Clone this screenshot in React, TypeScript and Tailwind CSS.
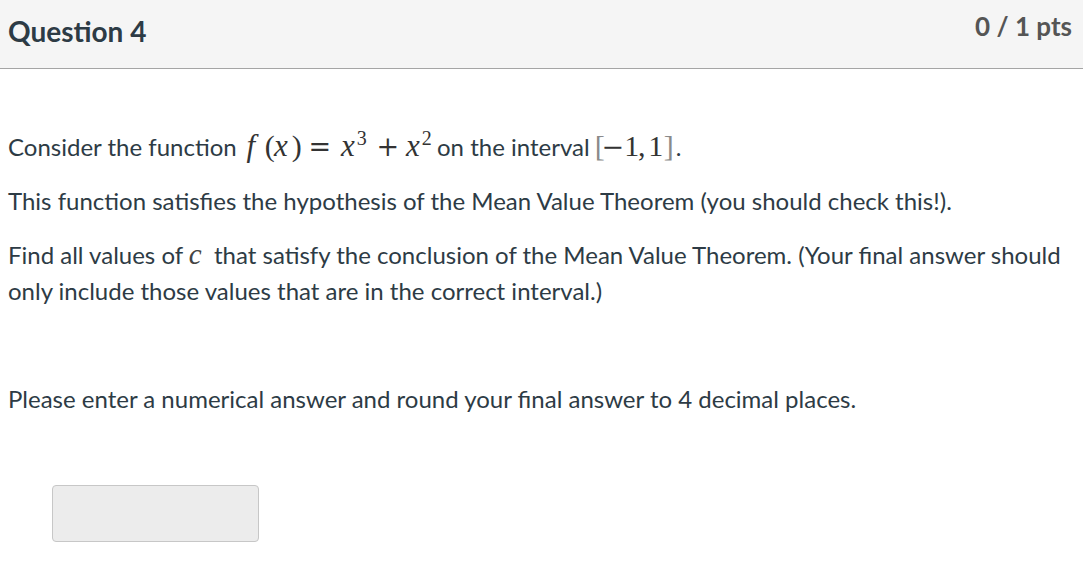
import React from "react";

const G = "inline-flex w-0 justify-center leading-none";
const L = "font-['Liberation_Serif',serif] italic text-[31px]";
const O = "font-['DejaVu_Serif',serif] text-[27px]";
const N = "font-['Liberation_Serif',serif] text-[30px]";
const S = "font-['Liberation_Serif',serif] text-[20px] relative -top-[11px]";

function Glyph({ ml, cls, children }: { ml: string; cls: string; children: React.ReactNode }) {
  return <span className={`${G} ${ml} ${cls}`}>{children}</span>;
}

export default function App() {
  return (
    <div className="w-[1083px] h-[583px] bg-white font-['Lato',sans-serif] text-[#2d3b45] overflow-hidden">
      <div className="h-[69px] bg-[#f5f5f5] border-b border-[#a5a5a5] flex items-center justify-between pl-[8px] pr-[11px]">
        <div className="text-[28px] font-bold text-[#2d3b45] -mt-[6px]">Question 4</div>
        <div className="text-[26px] font-bold text-[#555555] -mt-[16px]">0 / 1 pts</div>
      </div>
      <div className="pl-[8px] pt-[60px] text-[24px] leading-[36px]">
        <p className="mb-[18px]">
          Consider the function{" "}
          <span className="whitespace-nowrap text-[#333]">
            <Glyph ml="ml-[8px]" cls={L}>f</Glyph>
            <Glyph ml="ml-[19px]" cls={N}>(</Glyph>
            <Glyph ml="ml-[11px]" cls={L}>x</Glyph>
            <Glyph ml="ml-[16px]" cls={N}>)</Glyph>
            <Glyph ml="ml-[23px]" cls={O}>=</Glyph>
            <Glyph ml="ml-[28px]" cls={L}>x</Glyph>
            <Glyph ml="ml-[14px]" cls={S}>3</Glyph>
            <Glyph ml="ml-[26px]" cls={O}>+</Glyph>
            <Glyph ml="ml-[25px]" cls={L}>x</Glyph>
            <Glyph ml="ml-[14px]" cls={S}>2</Glyph>
            <span className="inline-block w-[4px]" />
          </span>{" "}
          on the interval{" "}
          <span className="whitespace-nowrap text-[#333]">
            <Glyph ml="ml-[4px]" cls={`${N} text-[#8a8a8a]`}>[</Glyph>
            <Glyph ml="ml-[13px]" cls={O}>−</Glyph>
            <Glyph ml="ml-[19px]" cls={N}>1</Glyph>
            <Glyph ml="ml-[10px]" cls={N}>,</Glyph>
            <Glyph ml="ml-[14px]" cls={N}>1</Glyph>
            <Glyph ml="ml-[13px]" cls={`${N} text-[#8a8a8a]`}>]</Glyph>
            <span className="inline-block w-[7px]" />
          </span>
          .
        </p>
        <p className="mb-[18px]">
          This function satisfies the hypothesis of the Mean Value Theorem (you should check this!).
        </p>
        <p className="mb-[18px]">
          Find all values of <i className="font-['Liberation_Serif',serif] text-[29px] leading-none text-[#444]">c</i>&nbsp; that satisfy the conclusion of the Mean Value Theorem. (Your final answer should only include those values that are in the correct interval.)
        </p>
        <p className="mb-[18px]">&nbsp;</p>
        <p className="mb-[18px]">
          Please enter a numerical answer and round your final answer to 4 decimal places.
        </p>
      </div>
      <div className="pl-[52px] pt-[50px]">
        <div className="w-[207px] h-[57px] bg-[#ececec] border border-[#c7c7c7] rounded-[4px]" />
      </div>
    </div>
  );
}
